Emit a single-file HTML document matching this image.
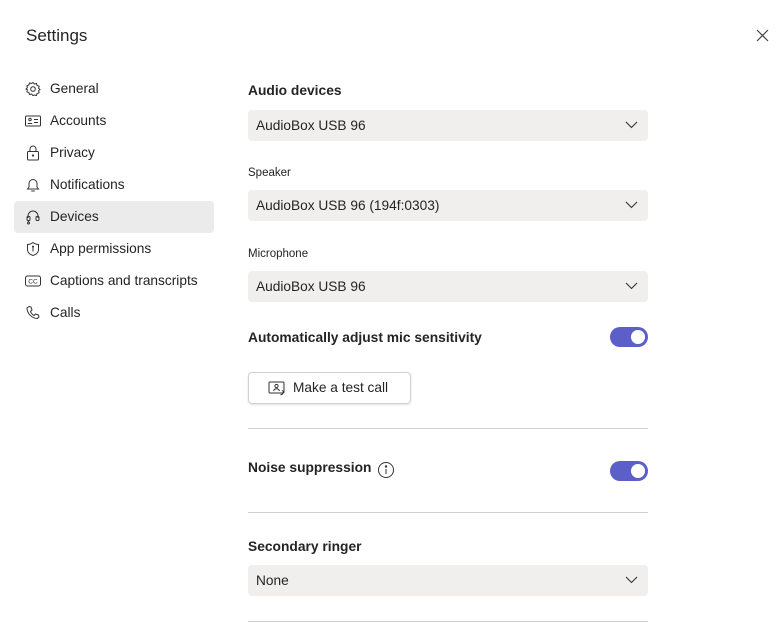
<!DOCTYPE html>
<html><head><style>
body{margin:0;width:783px;height:644px;background:#fff;font-family:"Liberation Sans",sans-serif;color:#242424;position:relative;overflow:hidden}
.a{position:absolute}
.t{font-size:17px;left:26px;top:26px}
.nav{left:14px;width:200px;height:32px;font-size:13.7px;line-height:32px}
.nav span{position:absolute;left:36px}
.nav svg{position:absolute;left:10px;top:8px}
.sel{background:#ebebeb;border-radius:4px}
.b{font-weight:bold;font-size:13.8px;left:248px}
.l{font-size:11.5px;left:248px}
.dd{left:248px;width:400px;height:31px;background:#f0efee;border-radius:4px;font-size:13.7px;line-height:31px}
.dd span{position:absolute;left:8px}
.dd svg{position:absolute;right:10px;top:10px}
.tg{left:610px;width:38px;height:20px;border-radius:10px;background:#5b5fc7}
.tg:after{content:"";position:absolute;right:3px;top:3px;width:14px;height:14px;border-radius:50%;background:#fff}
.hr{left:248px;width:400px;height:1px;background:#d1d1d1}
</style></head><body>
<div class="a t">Settings</div>
<svg class="a" style="left:756px;top:29px" width="13" height="13" viewBox="0 0 13 13"><path d="M1 1L12 12M12 1L1 12" stroke="#444" stroke-width="1.2"/></svg>

<div class="a nav" style="top:73px"><svg width="18" height="16" viewBox="0 0 18 16" fill="none" stroke="#333"><circle cx="9" cy="8" r="2.3"/><path d="M9 1.5l1.5 1.5 2-.5.6 2 2 .7-.5 2 1.4 1.3-1.4 1.3.5 2-2 .7-.6 2-2-.5L9 14.5 7.5 13l-2 .5-.6-2-2-.7.5-2L2 8l1.4-1.3-.5-2 2-.7.6-2 2 .5z"/></svg><span>General</span></div>
<div class="a nav" style="top:105px"><svg width="18" height="16" viewBox="0 0 18 16" fill="none" stroke="#333"><rect x="1.5" y="3" width="15" height="10" rx="1"/><circle cx="6" cy="6.5" r="1.2"/><path d="M3.8 10.5h4.4M10 6.5h4M10 9.5h4"/></svg><span>Accounts</span></div>
<div class="a nav" style="top:137px"><svg width="18" height="16" viewBox="0 0 18 16" fill="none" stroke="#333"><rect x="3.5" y="6.5" width="11" height="8.5" rx="1"/><path d="M6 6.5V4a3 3 0 016 0v2.5"/><circle cx="9" cy="10.5" r=".6" fill="#333"/></svg><span>Privacy</span></div>
<div class="a nav" style="top:169px"><svg width="18" height="16" viewBox="0 0 18 16" fill="none" stroke="#333"><path d="M3.5 12h11l-1.5-2V6.5a4 4 0 00-8 0V10z M7.3 14h3.4"/></svg><span>Notifications</span></div>
<div class="a nav sel" style="top:201px"><svg width="18" height="16" viewBox="0 0 18 16" fill="none" stroke="#333"><path d="M4 9V7a5 5 0 0110 0v2"/><rect x="3" y="7.5" width="3" height="4" rx="1"/><rect x="12" y="7.5" width="3" height="4" rx="1"/><path d="M4.5 11.5v1.5"/><circle cx="4.5" cy="14" r="1"/></svg><span>Devices</span></div>
<div class="a nav" style="top:233px"><svg width="18" height="16" viewBox="0 0 18 16" fill="none" stroke="#333"><path d="M9 1.5c2 1.5 3.7 2 5.5 2v5c0 3-2.5 5-5.5 6-3-1-5.5-3-5.5-6v-5c1.8 0 3.5-.5 5.5-2z"/><path d="M9 7v3.5"/><circle cx="9" cy="5.7" r=".6" fill="#333"/></svg><span>App permissions</span></div>
<div class="a nav" style="top:265px"><svg width="18" height="16" viewBox="0 0 18 16" fill="none" stroke="#333"><rect x="1.5" y="3" width="15" height="10" rx="2"/><text x="9" y="10.5" font-size="6.5" text-anchor="middle" fill="#333" stroke="none" font-family="Liberation Sans">CC</text></svg><span>Captions and transcripts</span></div>
<div class="a nav" style="top:297px"><svg width="18" height="16" viewBox="0 0 18 16" fill="none" stroke="#333"><path d="M5 1.5l2 .5 1 3-1.5 1.5c.7 1.8 2 3.2 3.5 4l1.5-1.5 3 1 .5 2-1.5 1.5C8 13.5 3 8.5 3 3z"/></svg><span>Calls</span></div>

<div class="a b" style="top:83px">Audio devices</div>
<div class="a dd" style="top:110px"><span>AudioBox USB 96</span><svg width="13" height="9" viewBox="0 0 13 9"><path d="M1 2l5.5 5.5L12 2" fill="none" stroke="#333" stroke-width="1.1"/></svg></div>
<div class="a l" style="top:167px">Speaker</div>
<div class="a dd" style="top:190px"><span>AudioBox USB 96 (194f:0303)</span><svg width="13" height="9" viewBox="0 0 13 9"><path d="M1 2l5.5 5.5L12 2" fill="none" stroke="#333" stroke-width="1.1"/></svg></div>
<div class="a l" style="top:248px">Microphone</div>
<div class="a dd" style="top:271px"><span>AudioBox USB 96</span><svg width="13" height="9" viewBox="0 0 13 9"><path d="M1 2l5.5 5.5L12 2" fill="none" stroke="#333" stroke-width="1.1"/></svg></div>
<div class="a b" style="top:330px">Automatically adjust mic sensitivity</div>
<div class="a tg" style="top:327px"></div>
<div class="a" style="left:248px;top:372px;width:161px;height:30px;border:1px solid #d1d1d1;border-radius:4px;box-shadow:0 1px 2px rgba(0,0,0,.12);font-size:13.7px;line-height:30px"><svg style="position:absolute;left:19px;top:8px" width="18" height="15" viewBox="0 0 18 15" fill="none" stroke="#333"><rect x="1" y="1" width="15" height="11" rx="1"/><circle cx="8.5" cy="5" r="1.6"/><path d="M5.5 10c.5-1.5 1.7-2.3 3-2.3s2.5.8 3 2.3M14 9.5l1.5 1-1 2.5-2 1"/></svg><span style="position:absolute;left:44px">Make a test call</span></div>
<div class="a hr" style="top:428px"></div>
<div class="a b" style="top:460px">Noise suppression</div>
<svg class="a" style="left:377px;top:461px" width="18" height="18" viewBox="0 0 18 18" fill="none" stroke="#333"><circle cx="9" cy="9" r="7.5"/><path d="M9 8v5"/><circle cx="9" cy="5.5" r=".7" fill="#333"/></svg>
<div class="a tg" style="top:461px"></div>
<div class="a hr" style="top:512px"></div>
<div class="a b" style="top:539px">Secondary ringer</div>
<div class="a dd" style="top:565px"><span>None</span><svg width="13" height="9" viewBox="0 0 13 9"><path d="M1 2l5.5 5.5L12 2" fill="none" stroke="#333" stroke-width="1.1"/></svg></div>
<div class="a hr" style="top:621px"></div>
</body></html>
